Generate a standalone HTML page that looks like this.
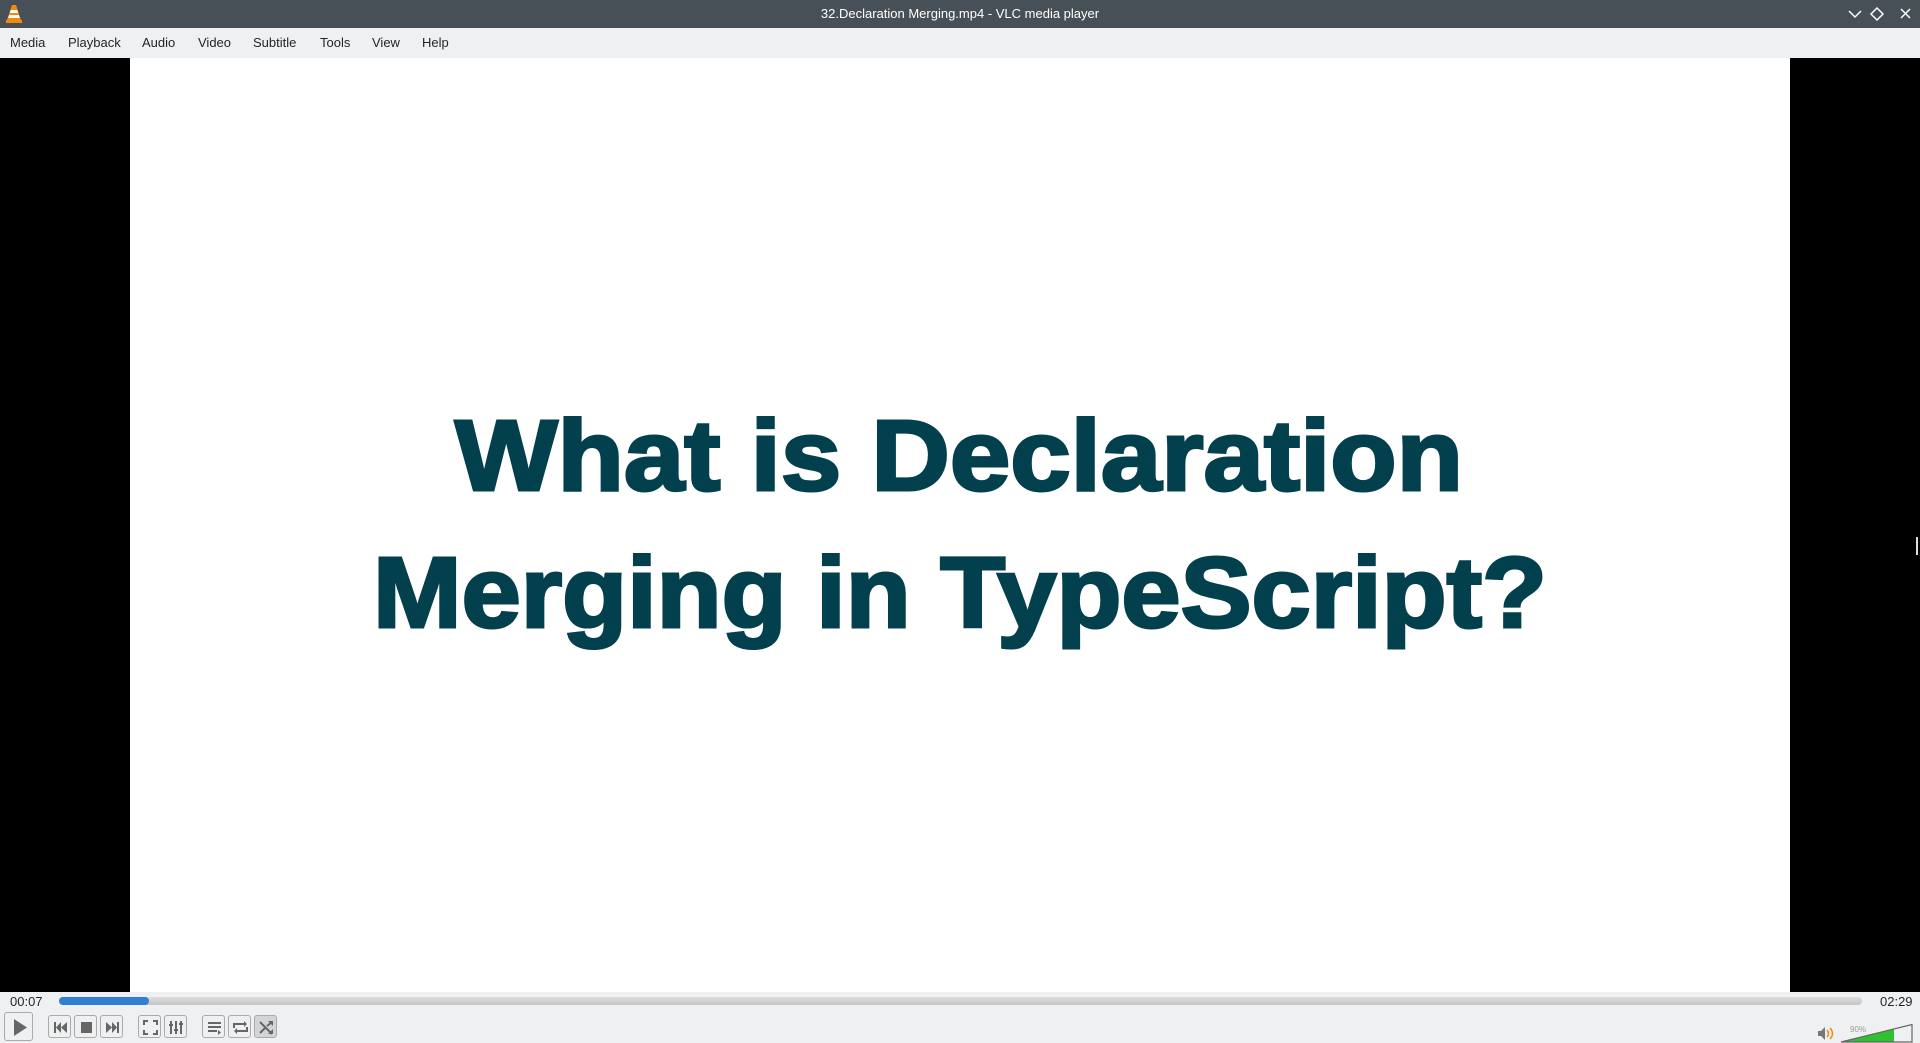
<!DOCTYPE html>
<html><head><meta charset="utf-8"><style>
*{margin:0;padding:0;box-sizing:border-box}
body{width:1920px;height:1043px;overflow:hidden;background:#eff0f1;font-family:"Liberation Sans","DejaVu Sans",sans-serif;position:relative}
.title{position:absolute;left:0;top:0;width:1920px;height:28px;background:#475057;color:#fff;font-size:13px;text-align:center;line-height:28px}
.menu{position:absolute;left:0;top:28px;width:1920px;height:30px;background:#eff0f1;font-size:13px;color:#232627}
.menu span{position:absolute;top:7px}
.video{position:absolute;left:0;top:58px;width:1920px;height:934px;background:#000}
.white{position:absolute;left:130px;top:58px;width:1660px;height:934px;background:#fff}
.t{position:absolute;font-size:13px;color:#232627;top:994px}
.bar{position:absolute;left:59px;top:997px;width:1803px;height:8px;border-radius:4px;background:linear-gradient(#dcdcdc,#c4c4c4)}
.fill{position:absolute;left:59px;top:997px;width:90px;height:8px;border-radius:4px;background:#2f7fd4}
.b{position:absolute;top:1015px;width:23px;height:23px;border:1px solid #aaa;border-radius:3px;background:#eff0f1}
.b svg{position:absolute;left:0;top:0}
</style></head><body>
<div class="title">32.Declaration Merging.mp4 - VLC media player</div>
<svg style="position:absolute;left:5px;top:4px" width="18" height="20" viewBox="0 0 18 20"><path d="M7 1h4l5 15H2z" fill="#f28a0d"/><path d="M5.8 6h6.4l1 3H4.8zM4.2 11h9.6l1 3H3.2z" fill="#fff"/><rect x="1" y="16" width="16" height="3" fill="#f28a0d"/></svg>
<svg style="position:absolute;left:1848px;top:6px" width="70" height="16" viewBox="0 0 70 16"><path d="M1 5l6 6 6-6" stroke="#fff" stroke-width="1.5" fill="none"/><path d="M29 2l6 6-6 6-6-6z" stroke="#fff" stroke-width="1.5" fill="none"/><path d="M53 3l9 9M62 3l-9 9" stroke="#fff" stroke-width="1.5"/></svg>
<div class="menu"><span style="left:10px">Media</span><span style="left:68px">Playback</span><span style="left:142px">Audio</span><span style="left:198px">Video</span><span style="left:253px">Subtitle</span><span style="left:320px">Tools</span><span style="left:372px">View</span><span style="left:422px">Help</span></div>
<div class="video"></div>
<div class="white"></div>
<div style="position:absolute;left:1916px;top:537px;width:2px;height:18px;background:#ddd"></div>
<svg style="position:absolute;left:0;top:0" width="1920" height="1043">
<g fill="#03404e" stroke="#03404e" stroke-width="3" font-family="Liberation Sans, sans-serif" font-weight="bold" font-size="100">
<text x="455" y="490" textLength="1008" lengthAdjust="spacingAndGlyphs">What is Declaration</text>
<text x="373" y="627" textLength="1174" lengthAdjust="spacingAndGlyphs">Merging in TypeScript?</text>
</g></svg>
<div class="t" style="left:10px">00:07</div>
<div class="t" style="left:1880px">02:29</div>
<div class="bar"></div><div class="fill"></div>
<div class="b" style="left:4px;top:1012px;width:29px;height:29px"><svg width="29" height="29"><path d="M9 6l13 8.5L9 23z" fill="#666"/></svg></div>
<div class="b" style="left:48px"><svg width="23" height="23"><path d="M5 6h2v11H5zM12 6v11l-5-5.5zM18 6v11l-6-5.5z" fill="#666"/></svg></div>
<div class="b" style="left:74px"><svg width="23" height="23"><rect x="6" y="6" width="11" height="11" fill="#666"/></svg></div>
<div class="b" style="left:100px"><svg width="23" height="23"><path d="M5 6v11l6-5.5zM11 6v11l5-5.5zM16 6h2v11h-2z" fill="#666"/></svg></div>
<div class="b" style="left:138px"><svg width="23" height="23"><path d="M5 9V5h4M14 5h4v4M18 14v4h-4M9 18H5v-4" stroke="#666" stroke-width="2" fill="none"/></svg></div>
<div class="b" style="left:164px"><svg width="23" height="23"><path d="M6 5v13M11 5v13M16 5v13" stroke="#666" stroke-width="2"/><path d="M4 9h4M9 14h4M14 8h4" stroke="#666" stroke-width="2"/></svg></div>
<div class="b" style="left:202px"><svg width="23" height="23"><path d="M5 7h13M5 11h13M5 15h9" stroke="#666" stroke-width="2"/><path d="M15 14v5l3-2.5z" fill="#666"/></svg></div>
<div class="b" style="left:228px"><svg width="23" height="23"><path d="M5 12V8h11M18 11v4H7" stroke="#666" stroke-width="2" fill="none"/><path d="M15 5l3 3-3 3zM8 12l-3 3 3 3z" fill="#666"/></svg></div>
<div class="b" style="left:254px;background:#d3d4d5"><svg width="23" height="23"><path d="M5 6l12 12M5 17l5-5M12 10l5-4" stroke="#666" stroke-width="2" fill="none"/><path d="M13 5h5v5zM13 18h5v-5z" fill="#666"/></svg></div>
<svg style="position:absolute;left:1816px;top:1024px" width="100" height="19" viewBox="0 0 100 19">
<path d="M2 7h3l4-4v13l-4-4H2z" fill="#777"/><path d="M11 6q3 3.5 0 7M14 4q5 5.5 0 11" stroke="#f28a0d" stroke-width="1.5" fill="none"/>
<path d="M26 18L78 5v13z" fill="#2ec32e"/>
<path d="M25 18L96 0.5V18z" fill="none" stroke="#666" stroke-width="1.2"/>
<text x="34" y="8" font-size="8" fill="#999" font-family="Liberation Sans,sans-serif">90%</text>
</svg>
</body></html>
